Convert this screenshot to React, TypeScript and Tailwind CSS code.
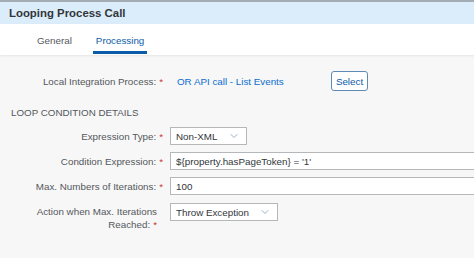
import { ChevronDown } from "lucide-react";

function Label({ children }: { children: React.ReactNode }) {
  return (
    <div className="flex items-center justify-end pr-[2px] text-[#54585c]">
      <span>{children}</span>
      <span className="ml-[3px] text-[#c9302c]">*</span>
    </div>
  );
}

function SelectBox({ value, width }: { value: string; width: string }) {
  return (
    <div className={`flex h-[18px] items-center justify-between border border-[#b5b8bb] bg-white pl-[5px] pr-[6px] text-[#32363a] ${width}`}>
      <span>{value}</span>
      <ChevronDown size={12} strokeWidth={1.4} className="text-[#6f8fb2]" />
    </div>
  );
}

function TextInput({ value }: { value: string }) {
  return (
    <div className="flex h-[18px] items-center border-y border-l border-[#b5b8bb] bg-white pl-[5px] text-[#32363a]">
      {value}
    </div>
  );
}

export default function App() {
  return (
    <div className="h-[261px] w-[474px] overflow-hidden bg-white text-[9.8px] leading-[13px] font-['Liberation_Sans',Arial,sans-serif]">
      <div className="h-[2px] bg-[#a4adb6]" />
      <div className="flex h-[22px] items-center bg-[#dbecfa] px-[9px] text-[11.4px] font-bold text-[#32363a]">
        Looping Process Call
      </div>

      <div className="relative z-10 flex h-[31px] bg-white pl-[37px] shadow-[0_1px_2px_rgba(0,0,0,0.08)]">
        <div className="h-[30px] border-b-[3px] border-transparent pt-[10px] text-[#54585c]">General</div>
        <div className="ml-[21px] h-[30px] border-b-[3px] border-[#0a5ca8] px-[3px] pt-[10px] text-[#0a5ca8]">
          Processing
        </div>
      </div>

      <div className="h-[203px] bg-[#f7f7f7]">
        <div className="grid grid-cols-[165px_1fr] gap-x-[5px] pt-[16px]">
          <Label>Local Integration Process:</Label>
          <div className="flex h-[20px] items-center">
            <span className="w-[161px] pl-[7px] text-[#0a6ed1]">OR API call - List Events</span>
            <button className="flex h-[20px] w-[37px] items-center justify-center rounded-[3px] border border-[#5e8ab8] bg-white text-[#0b5aa8]">
              Select
            </button>
          </div>
        </div>

        <div className="mt-[15px] pl-[11px] text-[#54585c] uppercase">Loop Condition Details</div>

        <div className="mt-[8px] grid grid-cols-[165px_1fr] gap-x-[5px] gap-y-[7px]">
          <Label>Expression Type:</Label>
          <SelectBox value="Non-XML" width="w-[77px]" />

          <Label>Condition Expression:</Label>
          <TextInput value="${property.hasPageToken} = '1'" />

          <Label>Max. Numbers of Iterations:</Label>
          <TextInput value="100" />

          <div className="flex flex-col items-end pr-[8px] pt-[3px] text-[#54585c]">
            <span>Action when Max. Iterations</span>
            <span>
              Reached:<span className="ml-[3px] text-[#c9302c]">*</span>
            </span>
          </div>
          <div className="pt-[1px]">
            <SelectBox value="Throw Exception" width="w-[108px]" />
          </div>
        </div>
      </div>
    </div>
  );
}
